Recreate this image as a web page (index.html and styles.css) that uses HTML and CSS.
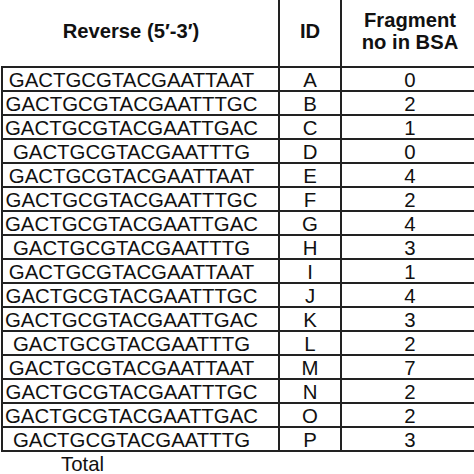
FILE: index.html
```html
<!DOCTYPE html>
<html>
<head>
<meta charset="utf-8">
<link rel="stylesheet" href="styles.css">
</head>
<body>
<table class="seq-table">
  <colgroup>
    <col class="c-seq">
    <col class="c-id">
    <col class="c-frag">
  </colgroup>
  <thead>
    <tr class="head-row">
      <th class="seq">Reverse (5′-3′)</th>
      <th class="id">ID</th>
      <th class="frag">Fragment<br>no in BSA</th>
    </tr>
  </thead>
  <tbody>
    <tr><td class="seq">GACTGCGTACGAATTAAT</td><td>A</td><td class="frag">0</td></tr>
    <tr><td class="seq">GACTGCGTACGAATTTGC</td><td>B</td><td class="frag">2</td></tr>
    <tr><td class="seq">GACTGCGTACGAATTGAC</td><td>C</td><td class="frag">1</td></tr>
    <tr><td class="seq">GACTGCGTACGAATTTG</td><td>D</td><td class="frag">0</td></tr>
    <tr><td class="seq">GACTGCGTACGAATTAAT</td><td>E</td><td class="frag">4</td></tr>
    <tr><td class="seq">GACTGCGTACGAATTTGC</td><td>F</td><td class="frag">2</td></tr>
    <tr><td class="seq">GACTGCGTACGAATTGAC</td><td>G</td><td class="frag">4</td></tr>
    <tr><td class="seq">GACTGCGTACGAATTTG</td><td>H</td><td class="frag">3</td></tr>
    <tr><td class="seq">GACTGCGTACGAATTAAT</td><td>I</td><td class="frag">1</td></tr>
    <tr><td class="seq">GACTGCGTACGAATTTGC</td><td>J</td><td class="frag">4</td></tr>
    <tr><td class="seq">GACTGCGTACGAATTGAC</td><td>K</td><td class="frag">3</td></tr>
    <tr><td class="seq">GACTGCGTACGAATTTG</td><td>L</td><td class="frag">2</td></tr>
    <tr><td class="seq">GACTGCGTACGAATTAAT</td><td>M</td><td class="frag">7</td></tr>
    <tr><td class="seq">GACTGCGTACGAATTTGC</td><td>N</td><td class="frag">2</td></tr>
    <tr><td class="seq">GACTGCGTACGAATTGAC</td><td>O</td><td class="frag">2</td></tr>
    <tr><td class="seq">GACTGCGTACGAATTTG</td><td>P</td><td class="frag">3</td></tr>
    <tr class="total-row"><td class="total" colspan="3">Total</td></tr>
  </tbody>
</table>
</body>
</html>
```
FILE: styles.css
```css
html, body {
  margin: 0;
  padding: 0;
  background: #ffffff;
}
body {
  font-family: "Liberation Sans", Arial, sans-serif;
  color: #111111;
}
.seq-table {
  border-collapse: collapse;
  table-layout: fixed;
  width: 473px;
  margin-left: 1px;
}
.c-seq { width: 277px; }
.c-id { width: 62px; }
.c-frag { width: 134px; }

.seq-table th {
  font-weight: bold;
  font-size: 20.2px;
  line-height: 22px;
  height: 62px;
  padding: 0 0 4px 0;
  text-align: center;
  vertical-align: middle;
  border-left: 2px solid #222;
  border-right: 2px solid #222;
  border-bottom: 2px solid #222;
}
.seq-table th.seq {
  border-left: none;
  padding-right: 18px;
}
.seq-table th.frag {
  padding-left: 4px;
}
.seq-table td {
  font-size: 20.4px;
  line-height: 19px;
  height: 19px;
  padding: 3px 0 0 0;
  text-align: center;
  vertical-align: top;
  border: 2px solid #222;
  white-space: nowrap;
}
.seq-table td.seq {
  padding-right: 18px;
}
.seq-table td.frag {
  padding-left: 4px;
}
.seq-table .total-row td.total {
  border: none;
  text-align: left;
  padding: 3px 0 0 59px;
  height: 19px;
}
```
